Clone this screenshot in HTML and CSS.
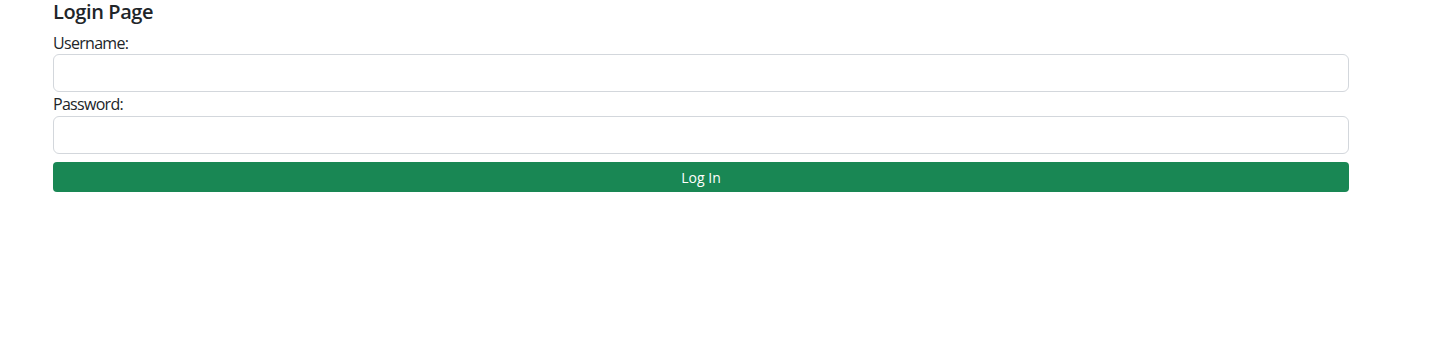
FILE: index.html
```html
<!DOCTYPE html>
<html lang="en">
<head>
<meta charset="utf-8">
<title>Login Page</title>
<link rel="stylesheet" href="styles.css">
</head>
<body>
<main class="container">
  <h5 class="title">Login Page</h5>
  <form class="login-form">
    <label class="label label-first" for="username">Username:</label>
    <input class="field" type="text" id="username">
    <label class="label" for="password">Password:</label>
    <input class="field" type="password" id="password">
    <button class="btn-login" type="button">Log In</button>
  </form>
</main>
</body>
</html>
```
FILE: styles.css
```css
* { box-sizing: border-box; }
html, body { margin: 0; padding: 0; background: #fff; }
body {
  font-family: "Open Sans", "Noto Sans", sans-serif;
  color: #212529;
  font-size: 16px;
}
.container {
  margin-left: 53px;
  width: 1296px;
}
.title {
  margin: 0 0 8px 0;
  font-size: 20px;
  font-weight: 600;
  line-height: 24px;
  letter-spacing: -0.4px;
}
.login-form {
  display: flex;
  flex-direction: column;
}
.label {
  display: block;
  font-size: 16px;
  line-height: 24px;
  letter-spacing: -0.7px;
}
.label-first { line-height: 22px; }
.field {
  display: block;
  width: 100%;
  height: 38px;
  border: 1px solid #d3d7dc;
  border-radius: 6px;
  background: #fff;
  padding: 6px 12px;
  font: inherit;
}
.btn-login {
  margin-top: 8px;
  height: 30px;
  width: 100%;
  border: none;
  border-radius: 4px;
  background: #198754;
  color: #fff;
  font-family: inherit;
  font-size: 14px;
  line-height: 20px;
  padding: 2px 0 0 0;
}
```
